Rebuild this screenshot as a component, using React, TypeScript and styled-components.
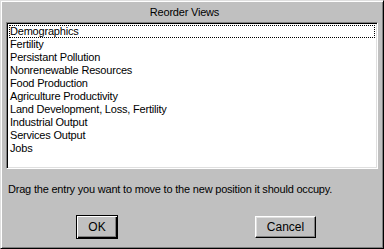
import styled, { createGlobalStyle } from 'styled-components';

const GlobalStyle = createGlobalStyle`
  html, body {
    margin: 0;
    padding: 0;
    background: #c0c0c0;
  }
`;

const Dialog = styled.div`
  box-sizing: border-box;
  width: 384px;
  height: 249px;
  background: #c0c0c0;
  border-style: solid;
  border-width: 1px;
  border-color: #dfdfdf #000000 #000000 #dfdfdf;
  box-shadow: inset 1px 1px #ffffff, inset -1px -1px #808080;
  display: flex;
  flex-direction: column;
  font-family: 'Liberation Sans', Arial, sans-serif;
  font-size: 11px;
  letter-spacing: -0.2px;
  color: #000;
`;

const Title = styled.div`
  height: 21px;
  line-height: 22px;
  text-align: center;
  font-size: 11px;
  padding-right: 15px;
`;

const ListBox = styled.div`
  box-sizing: border-box;
  margin: 0 5px 0 5px;
  height: 147px;
  background: #ffffff;
  border-style: solid;
  border-width: 1px;
  border-color: #808080 #ffffff #ffffff #808080;
  box-shadow: inset 1px 1px #000000, inset -1px -1px #dfdfdf;
  padding: 2px 2px;
  display: flex;
  flex-direction: column;
`;

const Item = styled.div<{ $focused?: boolean }>`
  box-sizing: border-box;
  height: 13px;
  padding-left: ${({ $focused }) => ($focused ? '0' : '1px')};
  border: ${({ $focused }) => ($focused ? '1px dotted #000' : 'none')};
  line-height: ${({ $focused }) => ($focused ? '11px' : '13px')};
  white-space: nowrap;
`;

const Hint = styled.div`
  margin: 13px 0 0 7px;
  height: 14px;
  line-height: 14px;
`;

const ButtonRow = styled.div`
  display: flex;
  align-items: flex-start;
  margin-top: 19px;
`;

const Button = styled.button<{ $default?: boolean; $width: number; $left: number }>`
  box-sizing: border-box;
  margin-left: ${({ $left }) => $left}px;
  width: ${({ $width }) => $width}px;
  height: ${({ $default }) => ($default ? 24 : 22)}px;
  margin-top: ${({ $default }) => ($default ? 0 : 1)}px;
  padding: 0;
  background: #c0c0c0;
  font-family: 'Liberation Sans', Arial, sans-serif;
  font-size: 12px;
  color: #000;
  border-style: solid;
  border-width: 1px;
  border-color: ${({ $default }) =>
    $default ? '#000' : '#ffffff #000000 #000000 #ffffff'};
  box-shadow: ${({ $default }) =>
    $default
      ? 'inset 1px 1px #ffffff, inset -1px -1px #000000, inset -2px -2px #808080'
      : 'inset -1px -1px #808080, inset 1px 1px #dfdfdf'};
`;

const items = [
  'Demographics',
  'Fertility',
  'Persistant Pollution',
  'Nonrenewable Resources',
  'Food Production',
  'Agriculture Productivity',
  'Land Development, Loss, Fertility',
  'Industrial Output',
  'Services Output',
  'Jobs',
];

export default function App() {
  return (
    <>
      <GlobalStyle />
      <Dialog>
        <Title>Reorder Views</Title>
        <ListBox>
          {items.map((it, i) => (
            <Item key={it} $focused={i === 0}>
              {it}
            </Item>
          ))}
        </ListBox>
        <Hint>Drag the entry you want to move to the new position it should occupy.</Hint>
        <ButtonRow>
          <Button $default $width={42} $left={75}>OK</Button>
          <Button $width={61} $left={137}>Cancel</Button>
        </ButtonRow>
      </Dialog>
    </>
  );
}
